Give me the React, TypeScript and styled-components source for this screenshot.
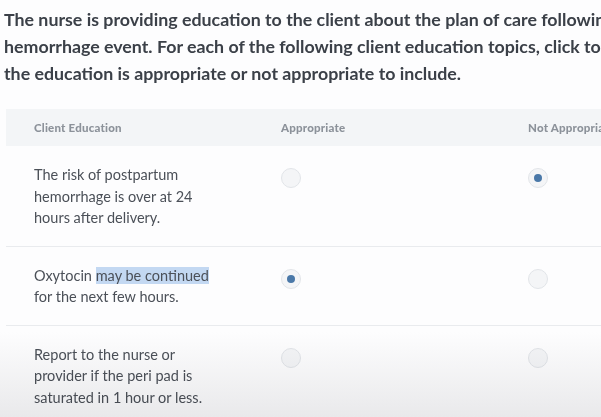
import React from "react";
import styled, { createGlobalStyle } from "styled-components";

const GlobalStyle = createGlobalStyle`
  html, body {
    margin: 0;
    padding: 0;
    background: #fdfdfe;
    overflow: hidden;
  }
  body {
    font-family: Lato, "Open Sans", sans-serif;
  }
`;

const Page = styled.div`
  position: relative;
  width: 601px;
  height: 417px;
  overflow: hidden;
  background: #fdfdfe;
`;

const Question = styled.p`
  margin: 0;
  padding: 6px 0 0 4px;
  font-size: 17.8px;
  font-weight: 700;
  line-height: 27px;
  color: #3b4048;
  white-space: nowrap;
`;

const Table = styled.div`
  margin: 22px 0 0 6px;
  width: 741px;
`;

const HeaderRow = styled.div`
  display: grid;
  grid-template-columns: 247px 247px 247px;
  height: 37px;
  align-items: center;
  background: #f3f5f7;
`;

const HeaderCell = styled.div`
  padding-left: 28px;
  font-size: 11.5px;
  font-weight: 900;
  letter-spacing: 0.2px;
  color: #8c929a;
  white-space: nowrap;
`;

const Row = styled.div`
  display: grid;
  grid-template-columns: 247px 247px 247px;
  align-items: start;
  padding: 18px 0 17px;
  border-bottom: 1px solid #e9ebee;
  &:last-child {
    border-bottom: none;
  }
`;

const RowText = styled.div`
  padding-left: 28px;
  max-width: 181px;
  font-size: 14.5px;
  line-height: 21.5px;
  color: #4b5058;
`;

const Highlight = styled.span`
  background: #c3d8f2;
`;

const RadioCell = styled.div`
  padding: 4px 0 0 28px;
`;

const Radio = styled.span<{ $checked?: boolean }>`
  display: flex;
  align-items: center;
  justify-content: center;
  width: 18px;
  height: 18px;
  border-radius: 50%;
  background: #f4f5f7;
  border: 1px solid #e2e5e9;
  &::after {
    content: "";
    display: ${(p) => (p.$checked ? "block" : "none")};
    width: 8px;
    height: 8px;
    border-radius: 50%;
    background: #4a78a8;
  }
`;

const Fade = styled.div`
  position: absolute;
  left: 0;
  right: 0;
  bottom: 0;
  height: 85px;
  pointer-events: none;
  mix-blend-mode: multiply;
  background: linear-gradient(to bottom, #ffffff 0%, #ebebec 100%);
`;

type Choice = "yes" | "no";

interface Item {
  text: React.ReactNode;
  choice?: Choice;
}

const items: Item[] = [
  {
    text: "The risk of postpartum hemorrhage is over at 24 hours after delivery.",
    choice: "no",
  },
  {
    text: (
      <>
        Oxytocin <Highlight>may be continued</Highlight> for the next few hours.
      </>
    ),
    choice: "yes",
  },
  {
    text: "Report to the nurse or provider if the peri pad is saturated in 1 hour or less.",
  },
];

const App = () => {
  return (
    <Page>
      <GlobalStyle />
      <Question>
        The nurse is providing education to the client about the plan of care
        following a postpartum
        <br />
        hemorrhage event. For each of the following client education topics,
        click to specify whether
        <br />
        the education is appropriate or not appropriate to include.
      </Question>
      <Table>
        <HeaderRow>
          <HeaderCell>Client Education</HeaderCell>
          <HeaderCell>Appropriate</HeaderCell>
          <HeaderCell>Not Appropriate</HeaderCell>
        </HeaderRow>
        {items.map((item, i) => (
          <Row key={i}>
            <RowText>{item.text}</RowText>
            <RadioCell>
              <Radio $checked={item.choice === "yes"} />
            </RadioCell>
            <RadioCell>
              <Radio $checked={item.choice === "no"} />
            </RadioCell>
          </Row>
        ))}
      </Table>
      <Fade />
    </Page>
  );
};

export default App;
